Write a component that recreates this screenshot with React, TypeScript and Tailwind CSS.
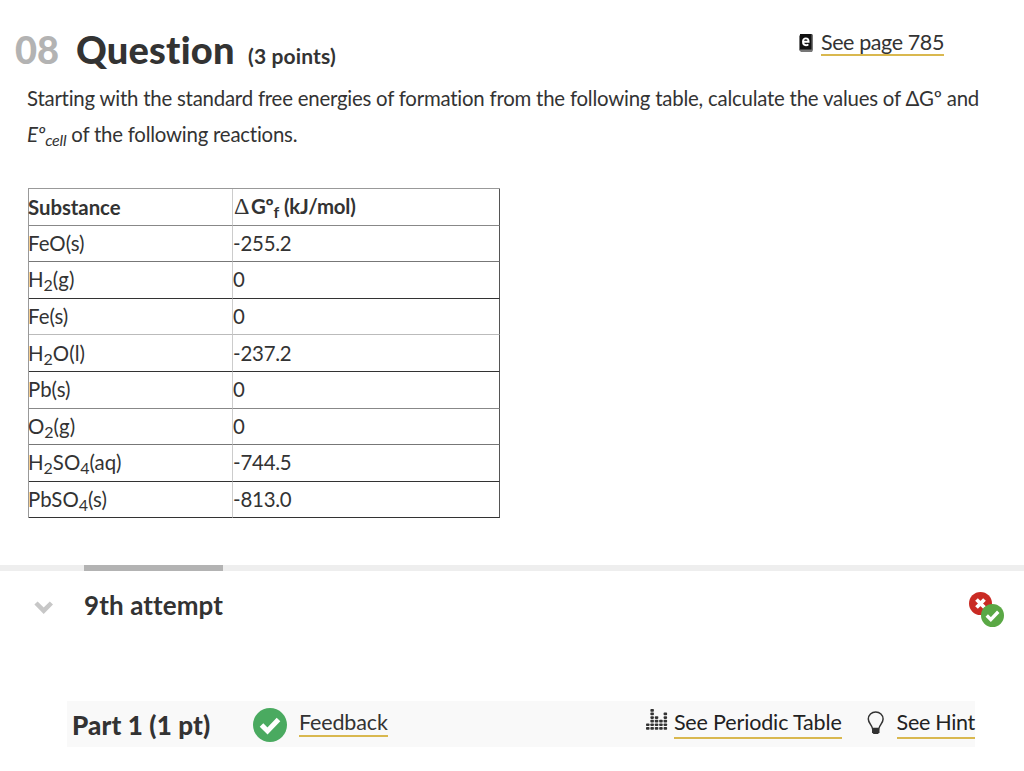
import type { ReactNode } from "react";

const rows: { name: ReactNode; value: string; line: string }[] = [
  { name: "FeO(s)", value: "-255.2", line: "border-b-[#777]" },
  { name: <>H<Sub>2</Sub>(g)</>, value: "0", line: "border-b-[#333]" },
  { name: "Fe(s)", value: "0", line: "border-b-[#bbb]" },
  { name: <>H<Sub>2</Sub>O(l)</>, value: "-237.2", line: "border-b-[#333]" },
  { name: "Pb(s)", value: "0", line: "border-b-[#888]" },
  { name: <>O<Sub>2</Sub>(g)</>, value: "0", line: "border-b-[#777]" },
  { name: <>H<Sub>2</Sub>SO<Sub>4</Sub>(aq)</>, value: "-744.5", line: "border-b-[#333]" },
  { name: <>PbSO<Sub>4</Sub>(s)</>, value: "-813.0", line: "border-b-[#333]" },
];

function Sub({ children }: { children: ReactNode }) {
  return <span className="relative top-[4px] text-[16px] leading-none">{children}</span>;
}

const BookIcon = () => (
  <svg width="15" height="20" viewBox="0 0 15 20">
    <path d="M2 1h11l1 1v15l-1 2H2l-2-2V3z" fill="#777" />
    <path d="M1 1h11.500v15.500H1z" fill="#111" />
    <path d="M4 8.800h5.600c0-2.200-1-3.400-2.800-3.400S4 6.800 4 8.800s1.100 3.400 2.900 3.400c1 0 1.800-.3 2.400-.9" fill="none" stroke="#fff" strokeWidth="1.900" />
  </svg>
);

const CheckIcon = ({ size, fill }: { size: number; fill: string }) => (
  <svg width={size} height={size} viewBox="0 0 34 34">
    <circle cx="17" cy="17" r="17" fill={fill} />
    <path d="M8.500 17l6 6L25.500 11.500" fill="none" stroke="#fff" strokeWidth="5" />
  </svg>
);

const CrossIcon = () => (
  <svg width="23" height="23" viewBox="0 0 23 23">
    <circle cx="11.500" cy="11.500" r="11.500" fill="#c92a23" />
    <path d="M7.500 7.500l8 8M15.500 7.500l-8 8" stroke="#fff" strokeWidth="3.800" />
  </svg>
);

// number of dots in each column, left to right
const columns = [2, 6, 4, 3, 5];

const TableIcon = () => (
  <svg width="22" height="22" viewBox="0 0 22 22" fill="#333">
    {columns.map((count, x) =>
      Array.from({ length: count }, (_, y) => (
        <rect key={`${x}-${y}`} x={x * 4.4} y={18 - y * 3.600} width="3.500" height="2.700" rx="0.800" />
      ))
    )}
  </svg>
);

const BulbIcon = () => (
  <svg width="18" height="24" viewBox="0 0 18 24">
    <path d="M5.500 17.500C5 14 1.300 12 1.300 8a7.400 7.100 0 0 1 14.800 0c0 4-3.700 6-4.200 9.500z" fill="none" stroke="#333" strokeWidth="1.500" />
    <path d="M5 18h7.500v3.200L11 23H6.500L5 21.200z" fill="#333" />
  </svg>
);

const linkStyle = "border-b-2 border-[#d9b84f] whitespace-nowrap";

export default function App() {
  return (
    <div className="h-[771px] w-[1024px] overflow-hidden bg-white font-['Lato',sans-serif] text-[#333] [font-variant-ligatures:none]">
      <header className="flex h-[80px] justify-between pl-[15px] pr-[80px]">
        <h1 className="flex items-baseline whitespace-nowrap pt-[25px] font-black leading-[48px]">
          <span className="w-[61px] text-[38px] text-[#b3b3b3]">08</span>
          <span className="w-[172px] text-[38px] tracking-[0.200px]">Question</span>
          <span className="text-[21px] font-bold tracking-[0.150px]">(3 points)</span>
        </h1>
        <div className="flex items-start pt-[28px] text-[21.500px] tracking-[-0.400px]">
          <span className="mr-[7px] pt-[5px]"><BookIcon /></span>
          <a className={`${linkStyle} h-[28px] leading-[28px]`}>See page 785</a>
        </div>
      </header>

      <p className="h-[108px] whitespace-nowrap pl-[27px] pt-px text-[20.400px] leading-[35.500px] tracking-[-0.220px]">
        Starting with the standard free energies of formation from the following table, calculate the values of ΔGº and
        <br />
        <i>Eº<Sub>cell</Sub></i> of the following reactions.
      </p>

      <table className="ml-[28px] w-[472px] table-fixed border-separate border-spacing-0 border-l border-t border-[#999] text-[20.400px] leading-[30px]">
        <colgroup>
          <col className="w-[204px]" />
          <col />
        </colgroup>
        <thead>
          <tr className="h-[36.600px] text-left">
            <th className="border-b border-r border-b-[#888] border-r-[#ccc] p-0 tracking-[-0.050px]">
              <span className="-ml-px">Substance</span>
            </th>
            <th className="border-b border-r border-b-[#888] border-r-[#555] p-0 pb-[2px] pl-px tracking-[-0.200px]">
              <span className="inline-block w-[17px] font-['Liberation_Serif',serif] text-[24px] font-normal leading-none">Δ</span>
              Gº<Sub>f</Sub> (kJ/mol)
            </th>
          </tr>
        </thead>
        <tbody>
          {rows.map((row, i) => (
            <tr key={i} className="h-[36.600px]">
              <td className={`border-b border-r border-r-[#ccc] p-0 pb-px ${row.line}`}>
                <span className="-ml-px">{row.name}</span>
              </td>
              <td className={`border-b border-r border-r-[#555] p-0 pb-px tracking-[-0.200px] ${row.line}`}>{row.value}</td>
            </tr>
          ))}
        </tbody>
      </table>

      <section className="mt-[47px]">
        <div className="h-[6px] bg-[#eee] pl-[84px]">
          <div className="h-full w-[139px] bg-[#b3b3b3]" />
        </div>
        <div className="flex h-[130px] items-start pl-[34px] pr-[20px]">
          <svg className="mt-[30px]" width="20" height="13" viewBox="0 0 20 13">
            <path d="M2 2l7.700 7.700L17.400 2" fill="none" stroke="#c7c7c7" strokeWidth="4.500" />
          </svg>
          <h2 className="ml-[30px] mt-[16px] text-[26px] font-bold leading-[36px] tracking-[0.100px]">9th attempt</h2>
          <div className="relative ml-auto mt-[21px] h-[35px] w-[35px]">
            <CrossIcon />
            <span className="absolute bottom-0 right-0"><CheckIcon size={23} fill="#5aa845" /></span>
          </div>
        </div>
      </section>

      <section className="ml-[67px] flex h-[46px] w-[908px] items-start bg-[#f9f9f9] text-[21.500px] tracking-[-0.150px]">
        <h3 className="w-[186px] whitespace-nowrap pl-[5px] pt-[6px] text-[26px] font-black leading-[36px] tracking-[0.150px]">Part 1 (1 pt)</h3>
        <span className="mr-[12px] pt-[7px]"><CheckIcon size={34} fill="#4aaa60" /></span>
        <a className={`${linkStyle} mt-[7px] h-[29px] leading-[28px]`}>Feedback</a>
        <div className="ml-auto flex text-[#222]">
          <span className="mr-[6px] mt-[8px]"><TableIcon /></span>
          <a className={`${linkStyle} mt-[7px] h-[31px] leading-[28px]`}>See Periodic Table</a>
          <span className="ml-[25px] mr-[12px] mt-[10px]"><BulbIcon /></span>
          <a className={`${linkStyle} mt-[7px] h-[31px] leading-[28px] tracking-[-0.300px]`}>See Hint</a>
        </div>
      </section>
    </div>
  );
}
